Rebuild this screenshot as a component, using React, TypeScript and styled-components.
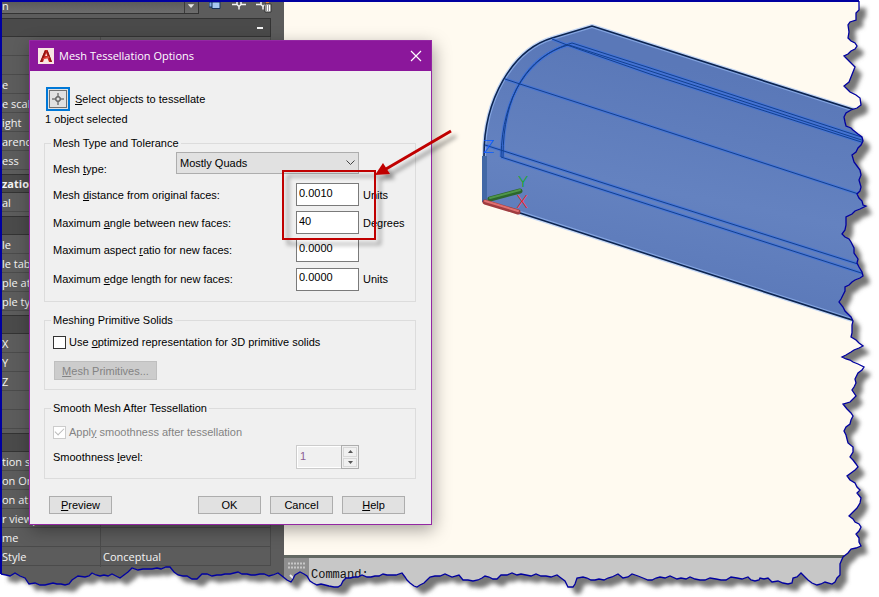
import React from "react";
import styled, { createGlobalStyle } from "styled-components";

const ui = `"Liberation Sans", Arial, sans-serif`;
const panelFont = `"Open Sans", "Noto Sans", sans-serif`;

const GlobalStyle = createGlobalStyle`
  *, *::before, *::after { box-sizing: border-box; }
  html, body { margin: 0; height: 100%; background: #fff; overflow: hidden; }
`;

/* ---------- workspace ---------- */

const Workspace = styled.div`
  position: relative;
  display: flex;
  height: 100vh;
  padding: 2px 0 0 2px;
  overflow: hidden;
  background: #fff;
`;

const Palette = styled.aside`
  flex: 0 0 282px;
  display: flex;
  flex-direction: column;
  background: #5c5c5c;
  font: 11px/20px ${panelFont};
  color: #f4f4f4;
  overflow: hidden;
`;

const PaletteTop = styled.div`
  display: flex;
  align-items: flex-start;
  gap: 10px;
  flex: 0 0 16px;
`;

const ObjectPicker = styled.button`
  display: flex;
  align-items: flex-start;
  justify-content: space-between;
  width: 197px;
  height: 12px;
  padding: 0;
  border: 0;
  border-right: 1px solid #333;
  border-bottom: 1px solid #333;
  background: linear-gradient(#5b5b5b, #6c6c6c);
  color: #f4f4f4;
  font: 11px/8px ${panelFont};
`;

const PickerArrow = styled.svg`
  display: block;
  border-left: 1px solid #3a3a3a;
`;

const ToolIcons = styled.svg`
  display: block;
`;

const Section = styled.section`
  width: 269px;
  margin-bottom: 4px;
`;

const SectionHead = styled.h3`
  display: flex;
  align-items: center;
  justify-content: space-between;
  height: 19px;
  margin: 0;
  padding-right: 7px;
  border: solid #333;
  border-width: 1px 1px 1px 0;
  background: #4a4a4a;
  font: bold 11px/17px ${panelFont};
`;

const Minus = styled.span`
  width: 6px;
  height: 2px;
  background: #f4f4f4;
`;

const PropRow = styled.div`
  display: grid;
  grid-template-columns: 98px 1fr;
  height: 19px;
  border: solid #4b4b4b;
  border-width: 0 1px 1px 0;
  white-space: pre;
`;

const PropValue = styled.span`
  padding-left: 2px;
  border-left: 1px solid #4b4b4b;
`;

const Drawing = styled.main`
  flex: 1;
  min-width: 0;
  display: flex;
  flex-direction: column;
  background: #fffaf0;
`;

const Viewport = styled.svg`
  flex: 1;
  min-height: 0;
  width: 100%;
  display: block;
`;

const CommandBar = styled.div`
  flex: 0 0 42px;
  display: flex;
  border-top: 3px solid #626862;
  background: #c7c7c7;
`;

const Grip = styled.svg`
  display: block;
  background: #8f8f8f;
`;

const CommandText = styled.span`
  padding: 8px 0 0 2px;
  font: 12px/18px "Liberation Mono", monospace;
  color: #111;
`;

const TornEdge = styled.svg`
  position: absolute;
  inset: 0;
  width: 100%;
  height: 100%;
  pointer-events: none;
`;

/* ---------- dialog ---------- */

const Dialog = styled.div`
  position: absolute;
  left: 29px;
  top: 40px;
  width: 403px;
  border: 1px solid #9428a4;
  background: #f0f0f0;
  box-shadow: 2px 5px 16px rgba(0, 0, 0, 0.35);
  color: #000;
  font: 11px/14px ${ui};
`;

const TitleBar = styled.header`
  display: flex;
  align-items: center;
  height: 30px;
  padding: 0 9px 0 8px;
  background: #8b179b;
`;

const Title = styled.h2`
  flex: 1;
  margin: 0 0 0 5px;
  color: #fff;
  font: 11px/16px ${panelFont};
`;

const CloseButton = styled.button`
  display: flex;
  padding: 0;
  border: 0;
  background: none;
`;

const Body = styled.form`
  padding: 16px 15px 10px 14px;
`;

const PickRow = styled.div`
  display: flex;
  align-items: center;
  gap: 5px;
  padding-left: 2px;
`;

const PickButton = styled.button`
  display: flex;
  width: 24px;
  height: 24px;
  padding: 0;
  border: 2px solid #0078d7;
  background: #e1e1e1;
`;

const Status = styled.p`
  margin: 1px 0 10px 1px;
`;

const Group = styled.fieldset`
  display: flex;
  flex-direction: column;
  min-width: 0;
  margin: 0 0 11px;
  padding: 0 8px 9px;
  border: 1px solid #dcdcdc;
`;

const Legend = styled.legend`
  margin-left: -2px;
  padding: 0 2px;
  line-height: 14px;
`;

const SelectRow = styled.div`
  display: flex;
  align-items: center;
  justify-content: space-between;
  margin: 0 48px 7px 0;
`;

const SelectLabel = styled.label`
  padding-top: 12px;
`;

const SelectBox = styled.span`
  position: relative;
  width: 183px;
`;

const Select = styled.select`
  display: block;
  appearance: none;
  width: 100%;
  height: 22px;
  padding: 0 20px 0 3px;
  border: 1px solid #adadad;
  border-radius: 0;
  background: #e1e1e1;
  color: #000;
  font: inherit;
`;

const SelectArrow = styled.svg`
  position: absolute;
  right: 4px;
  top: 8px;
  pointer-events: none;
`;

const FieldGrid = styled.div`
  display: grid;
  grid-template-columns: 1fr 63px 44px;
  align-items: center;
  column-gap: 4px;
  row-gap: 5px;
`;

const ToleranceGrid = styled(FieldGrid)`
  grid-template-rows: 23px 23px 22px 26px;
`;

const Field = styled.input`
  width: 100%;
  height: 23px;
  padding: 0 2px 4px;
  border: 1px solid #7a7a7a;
  border-radius: 0;
  background: #fff;
  color: #000;
  font: inherit;
`;

const CheckRow = styled.label<{ $dim?: boolean }>`
  display: flex;
  align-items: center;
  gap: 3px;
  margin-top: ${(p) => (p.$dim ? "10px" : "8px")};
  color: ${(p) => (p.$dim ? "#838383" : "#000")};
`;

const Check = styled.input`
  appearance: none;
  display: grid;
  place-items: center;
  width: 13px;
  height: 13px;
  margin: 0;
  border: 1px solid #333;
  background: #fff;
  &:disabled { border-color: #ccc; }
  &:checked::before {
    content: "";
    width: 9px;
    height: 5px;
    margin-top: -3px;
    border: solid #bbb;
    border-width: 0 0 1px 1px;
    transform: rotate(-45deg);
  }
`;

const PushButton = styled.button<{ $wide?: boolean }>`
  width: ${(p) => (p.$wide ? "103px" : "63px")};
  height: ${(p) => (p.$wide ? "19px" : "18px")};
  padding: 0;
  border: 1px solid #adadad;
  background: #e1e1e1;
  color: #000;
  font: inherit;
  line-height: 16px;
  &:disabled {
    margin: 12px 0 0 1px;
    border-color: #bfbfbf;
    background: #ccc;
    color: #838383;
  }
`;

const LevelRow = styled(FieldGrid)`
  margin-top: 6px;
`;

const Spinner = styled.span`
  display: flex;
  height: 24px;
  border: 1px solid #ccc;
`;

const SpinInput = styled.input`
  appearance: textfield;
  flex: 1;
  min-width: 0;
  padding: 0 2px 3px;
  border: 1px solid #fff;
  background: #f0f0f0;
  color: #8b5f93;
  font: inherit;
  &::-webkit-inner-spin-button { appearance: none; }
`;

const SpinButtons = styled.span`
  display: grid;
  grid-template-rows: 1fr 1fr;
  gap: 1px;
  width: 18px;
  padding: 1px;
  margin: -1px;
  border: 1px solid #adadad;
`;

const SpinButton = styled.button`
  display: grid;
  place-items: center;
  min-height: 0;
  padding: 0;
  border: 1px solid #d8d8d8;
  background: #f0f0f0;
`;

const Footer = styled.footer`
  display: flex;
  gap: 9px;
  margin-top: 17px;
  padding: 0 11px 0 5px;
`;

const PreviewButton = styled(PushButton)`
  margin-right: auto;
`;

const Callout = styled.svg`
  position: absolute;
  left: 245px;
  top: 79px;
  pointer-events: none;
`;

/* ---------- data ---------- */

const sections: { title: string; collapse?: boolean; rows: [string, string?][] }[] = [
  { title: "", collapse: true, rows: [[""], [""], ["e"], ["e scale"], ["ight"], ["arency"], ["ess"]] },
  { title: "zation", rows: [["al"]] },
  { title: "", rows: [["le"], ["le table"], ["ple attac"], ["ple type"]] },
  { title: "", rows: [["X"], ["Y"], ["Z"], [""], [""]] },
  { title: "", rows: [["tion sty"], ["on On"], ["on at ori"], ["r viewp"], ["me"], ["Style", "Conceptual"]] },
];

const fields: { id: string; label: React.ReactNode; value: string; unit: string }[] = [
  { id: "distance", label: <>Mesh <u>d</u>istance from original faces:</>, value: "0.0010", unit: "Units" },
  { id: "angle", label: <>Maximum <u>a</u>ngle between new faces:</>, value: "40", unit: "Degrees" },
  { id: "ratio", label: <>Maximum aspect <u>r</u>atio for new faces:</>, value: "0.0000", unit: "" },
  { id: "edge", label: <>Maximum <u>e</u>dge length for new faces:</>, value: "0.0000", unit: "Units" },
];

const tornPoints: [number, number][] = [
  [859, 1], [859, 10], [856, 13], [856, 20], [850, 22], [848, 25], [849, 32], [848, 38], [857, 46], [844, 56],
  [850, 62], [855, 67], [851, 77], [844, 86], [850, 92], [860, 98], [861, 105], [851, 110], [846, 113],
  [844, 117], [846, 126], [853, 130], [862, 137], [861, 145], [852, 155], [854, 162], [860, 170], [859, 180],
  [861, 187], [857, 194], [863, 205], [866, 206], [855, 211], [846, 217], [846, 225], [842, 234], [851, 242],
  [854, 253], [858, 259], [857, 263], [863, 276], [855, 280], [845, 287], [843, 295], [839, 302], [845, 311],
  [851, 317], [852, 325], [851, 337], [863, 346], [854, 350], [842, 357], [864, 367], [858, 373], [855, 379],
  [856, 383], [852, 390], [856, 396], [850, 402], [843, 404], [847, 409], [853, 416], [844, 431], [848, 443],
  [853, 447], [850, 457], [858, 467], [847, 476], [860, 490], [857, 493], [861, 498], [857, 508], [849, 516],
  [861, 527], [856, 534], [861, 546], [851, 549], [843, 557], [840, 564], [840, 575], [832, 584], [825, 582],
  [821, 584], [812, 583], [801, 573], [793, 578], [792, 583], [783, 583], [778, 581], [772, 582], [768, 578],
  [760, 578], [759, 580], [751, 580], [748, 577], [742, 579], [731, 577], [721, 580], [710, 578], [700, 580],
  [690, 577], [677, 579], [670, 576], [660, 577], [648, 580], [643, 578], [632, 574], [623, 578], [618, 574],
  [612, 577], [595, 580], [583, 577], [577, 578], [573, 587], [568, 587], [565, 581], [557, 575], [551, 577],
  [536, 574], [526, 575], [512, 573], [501, 575], [497, 579], [485, 576], [478, 580], [463, 580], [459, 575],
  [452, 577], [445, 574], [430, 577], [417, 587], [410, 583], [402, 573], [396, 575], [383, 574], [367, 577],
  [362, 575], [346, 578], [338, 587], [325, 585], [313, 583], [307, 576], [300, 572], [295, 575], [291, 582],
  [278, 573], [273, 575], [260, 574], [255, 575], [238, 572], [217, 575], [202, 574], [197, 579], [187, 576],
  [178, 575], [170, 567], [143, 569], [132, 568], [124, 575], [120, 578], [112, 574], [100, 576], [92, 573],
  [85, 577], [78, 576], [72, 580], [69, 584], [53, 583], [45, 585], [35, 583], [29, 584], [25, 578], [15, 573],
  [10, 576], [1, 574],
];

// Splits the long runs and nudges the new points so that the edge looks ragged.
const ragged = tornPoints.flatMap(([x, y], i) => {
  const next = tornPoints[i + 1];
  if (!next || i === 0) return [[x, y]];
  const steps = Math.floor(Math.hypot(next[0] - x, next[1] - y) / 4);
  const out = [[x, y]];
  for (let s = 1; s < steps; s++) {
    const t = s / steps;
    const nudge = (s + i) % 2;
    out.push([Math.round(x + (next[0] - x) * t + (y < 550 ? nudge : 0)), Math.round(y + (next[1] - y) * t + (y < 550 ? 0 : nudge))]);
  }
  return out;
});
const edge = ragged.map((p) => p.join(",")).join(" L");
const sheet = `M1,1 L${edge} Z`;
const outside = `M0,0 H879 V597 H0 Z ${sheet}`;

/* ---------- drawings ---------- */

const ribs = [
  "M572,43 L650,68 L880,143",
  "M569,45 L650,71 L880,146",
  "M552,39 L567,45 L650,74 L880,148",
  "M505,79 L520,84 L650,126 L880,201",
  "M485,145 L650,198 L880,271",
  "M501,157 L650,205 L880,279",
  "M572,43 C530,55 502,95 501,157",
  "M568,45 C527,57 503,95 503,157",
];

function Model() {
  const outline = "M880,118 L592,26 L552,38 C512,50 484,100 484,155 V201 L520,213 L650,255 L880,329";
  return (
    <Viewport viewBox="284 2 595 553" preserveAspectRatio="xMinYMin slice">
      <defs>
        <linearGradient id="vault" x1="0.4" y1="0" x2="0.15" y2="1">
          <stop offset="0.1" stopColor="#5a78b8" />
          <stop offset="0.5" stopColor="#6482c0" />
          <stop offset="0.85" stopColor="#5a78b8" />
        </linearGradient>
      </defs>
      <path d={outline} fill="url(#vault)" />
      <g fill="none" strokeLinejoin="round">
        <path d={outline} stroke="#9cc0fa" strokeWidth="4" opacity="0.6" />
        <path d={outline} stroke="#0c2450" strokeWidth="1.6" />
        {ribs.map((d) => <path key={d} d={d} stroke="#3a70e0" strokeWidth="3" opacity="0.65" />)}
        {ribs.map((d) => <path key={d} d={d} stroke="#12408f" strokeWidth="1" />)}
      </g>
      <rect x="482" y="156" width="5" height="46" fill="#4268a6" />
      <g strokeLinecap="round">
        <path d="M490,199 L520,191" stroke="#2c662c" strokeWidth="5" />
        <path d="M490,198 L520,190" stroke="#4f964a" strokeWidth="2" />
        <path d="M485,202 L518,212" stroke="#a03c40" strokeWidth="5" />
        <path d="M485,201 L518,211" stroke="#e07070" strokeWidth="2" />
      </g>
      <g fontFamily="Lato, sans-serif" fontWeight="300" textAnchor="middle">
        <text x="489" y="153" fontSize="18" fill="#0a5cff">Z</text>
        <text x="523" y="187" fontSize="16" fill="#00b000">Y</text>
        <text x="522" y="208" fontSize="18" fill="#ff2020">X</text>
      </g>
    </Viewport>
  );
}

function Logo() {
  return (
    <svg width="16" height="16" viewBox="0 0 16 16" aria-hidden="true">
      <rect width="16" height="16" fill="#f8e6e2" />
      <path d="M2 14 7 2h2.500L14 14h-3l-1.500-4H6.500L5 14zM7.200 8h2L8.200 5z" fill="#c8231e" fillRule="evenodd" />
      <path d="M2 14 7 2l.8 1.500L4 14z" fill="#8c1512" />
      <path d="M9.500 2 14 14h-1.500L8.800 4z" fill="#8c1512" />
      <path d="M4.500 10.500 11 8l.5 2-7 1.500z" fill="#dd5148" />
    </svg>
  );
}

export default function App() {
  return (
    <>
      <GlobalStyle />
      <Workspace>
        <Palette>
          <PaletteTop>
            <ObjectPicker type="button" aria-label="Object type">
              <span>n</span>
              <PickerArrow width="14" height="11" viewBox="0 0 14 11"><path d="M3 2h7L6.500 6z" fill="#e8e8e8" /></PickerArrow>
            </ObjectPicker>
            <ToolIcons width="66" height="12" viewBox="0 0 66 12" aria-hidden="true">
              <path d="M0 0h6v5H0z" fill="#7fa8e0" stroke="#16335e" />
              <path d="M3 0h8v6.500H3z" fill="#a8c8f2" stroke="#16335e" />
              <g stroke="#f4f4f4" strokeWidth="1.500" fill="none">
                <path d="M23 2.500h5M32 2.500h5M28 0v2.500l2 2 2-2V0M30 4.500v3" />
                <path d="M47 2.500h5M52 0v2.500l2 2 2-2M54 4.500v3" />
              </g>
              <path d="M57 1l3-1" stroke="#e88830" strokeWidth="1.500" />
              <path d="M56 2h6v8h-6z" fill="#fff" stroke="#333" />
              <path d="M57 4h4M57 6h4M57 8h4" stroke="#333" strokeDasharray="1 1" />
            </ToolIcons>
          </PaletteTop>
          {sections.map((s, i) => (
            <Section key={i}>
              <SectionHead>{s.title}{s.collapse && <><span /><Minus /></>}</SectionHead>
              {s.rows.map(([label, value], r) => (
                <PropRow key={r}><span>{label}</span><PropValue>{value}</PropValue></PropRow>
              ))}
            </Section>
          ))}
        </Palette>

        <Drawing>
          <Model />
          <CommandBar>
            <Grip width="25" height="39" viewBox="0 0 25 39" aria-hidden="true">
              <path d="M4 5.500h17M4 9.500h17" stroke="#c7c7c7" strokeWidth="2" strokeDasharray="2 1" />
              <path d="M6 17l5 5" stroke="#eee" strokeWidth="2" />
            </Grip>
            <CommandText>Command:</CommandText>
          </CommandBar>
        </Drawing>

        <TornEdge viewBox="0 0 879 597" preserveAspectRatio="none" aria-hidden="true">
          <defs>
            <clipPath id="beyond"><path d={outside} clipRule="evenodd" /></clipPath>
            <filter id="soft" x="-5%" y="-5%" width="110%" height="110%"><feGaussianBlur stdDeviation="2" /></filter>
          </defs>
          <path d={outside} fill="#fff" fillRule="evenodd" />
          <g clipPath="url(#beyond)">
            <path d={sheet} transform="translate(7 7)" fill="#777" filter="url(#soft)" />
          </g>
          <path d="M1,574 V1 H859" fill="none" stroke="#0000a0" strokeWidth="2" />
          <path d={`M${edge}`} fill="none" stroke="#0000a0" strokeWidth="1.3" />
        </TornEdge>

        <Dialog role="dialog" aria-labelledby="dialog-title">
          <TitleBar>
            <Logo />
            <Title id="dialog-title">Mesh Tessellation Options</Title>
            <CloseButton type="button" aria-label="Close">
              <svg width="12" height="12" viewBox="0 0 12 12"><path d="M1 1l10 10M11 1 1 11" stroke="#fff" strokeWidth="1.200" /></svg>
            </CloseButton>
          </TitleBar>
          <Body onSubmit={(e) => e.preventDefault()}>
            <PickRow>
              <PickButton type="button" id="pick">
                <svg width="20" height="20" viewBox="0 0 20 20">
                  <rect x="1.500" y="1.500" width="17" height="17" fill="none" stroke="#000" strokeDasharray="1 1" />
                  <path d="M10 4v4M10 12v4M4 10h4M12 10h4M8 8h4v4H8z" fill="none" stroke="#444" />
                </svg>
              </PickButton>
              <label htmlFor="pick"><u>S</u>elect objects to tessellate</label>
            </PickRow>
            <Status>1 object selected</Status>

            <Group>
              <Legend>Mesh Type and Tolerance</Legend>
              <SelectRow>
                <SelectLabel htmlFor="mesh-type">Mesh <u>t</u>ype:</SelectLabel>
                <SelectBox>
                  <Select id="mesh-type" defaultValue="quads"><option value="quads">Mostly Quads</option></Select>
                  <SelectArrow width="9" height="6" viewBox="0 0 9 6"><path d="M.5.5l4 4 4-4" fill="none" stroke="#444" /></SelectArrow>
                </SelectBox>
              </SelectRow>
              <ToleranceGrid>
                {fields.map((f) => (
                  <React.Fragment key={f.id}>
                    <label htmlFor={f.id}>{f.label}</label>
                    <Field id={f.id} defaultValue={f.value} />
                    <span>{f.unit}</span>
                  </React.Fragment>
                ))}
              </ToleranceGrid>
            </Group>

            <Group>
              <Legend>Meshing Primitive Solids</Legend>
              <CheckRow><Check type="checkbox" /><span>Use <u>o</u>ptimized representation for 3D primitive solids</span></CheckRow>
              <PushButton type="button" $wide disabled><u>M</u>esh Primitives...</PushButton>
            </Group>

            <Group>
              <Legend>Smooth Mesh After Tessellation</Legend>
              <CheckRow $dim><Check type="checkbox" defaultChecked disabled /><span>Appl<u>y</u> smoothness after tessellation</span></CheckRow>
              <LevelRow>
                <label htmlFor="level">Smoothness <u>l</u>evel:</label>
                <Spinner>
                  <SpinInput id="level" type="number" defaultValue={1} disabled />
                  <SpinButtons>
                    <SpinButton type="button" disabled aria-label="Increase"><svg width="5" height="3" viewBox="0 0 5 3"><path d="M0 3h5L2.500 0z" fill="#555" /></svg></SpinButton>
                    <SpinButton type="button" disabled aria-label="Decrease"><svg width="5" height="3" viewBox="0 0 5 3"><path d="M0 0h5L2.500 3z" fill="#555" /></svg></SpinButton>
                  </SpinButtons>
                </Spinner>
              </LevelRow>
            </Group>

            <Footer>
              <PreviewButton type="button"><u>P</u>review</PreviewButton>
              <PushButton type="submit">OK</PushButton>
              <PushButton type="button">Cancel</PushButton>
              <PushButton type="button"><u>H</u>elp</PushButton>
            </Footer>
          </Body>

          <Callout width="190" height="140" viewBox="275 120 190 140" aria-hidden="true">
            <defs>
              <filter id="drop" x="-10%" y="-10%" width="125%" height="125%">
                <feDropShadow dx="5" dy="5" stdDeviation="2" floodColor="#000" floodOpacity="0.4" />
              </filter>
            </defs>
            <g filter="url(#drop)" stroke="#c00000" fill="none">
              <rect x="283" y="171" width="92" height="68" strokeWidth="2" />
              <path d="M451,131 L386,169" strokeWidth="3" />
              <path d="M375,175 L383,163 L390,174 Z" fill="#c00000" stroke="none" />
            </g>
          </Callout>
        </Dialog>
      </Workspace>
    </>
  );
}
